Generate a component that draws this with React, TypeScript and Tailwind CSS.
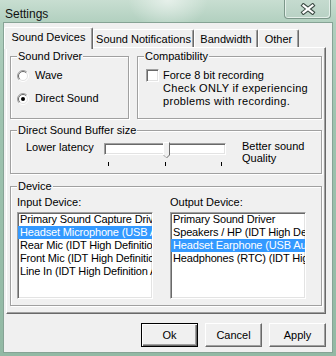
import React from "react";

const sunken =
  "border border-t-[#a0a0a0] border-l-[#a0a0a0] border-r-white border-b-white shadow-[inset_1px_1px_0_#696969,inset_-1px_-1px_0_#e3e3e3]";
const group = "border border-[#a0a0a0] shadow-[inset_1px_1px_0_#fff,1px_1px_0_#fff]";
const legend = "ml-[6px] px-px bg-[#f0f0f0] leading-[13px]";

function Radio({ checked }: { checked?: boolean }) {
  return (
    <svg width="12" height="12" viewBox="0 0 12 12" className="shrink-0">
      <circle cx="6" cy="6" r="5" fill="#fff" />
      <path d="M9.9 2.1 A5.5 5.5 0 0 0 2.1 9.9" stroke="#a0a0a0" fill="none" />
      <path d="M2.1 9.9 A5.5 5.5 0 0 0 9.9 2.1" stroke="#fff" fill="none" />
      <path d="M9.2 2.8 A4.5 4.5 0 0 0 2.8 9.2" stroke="#696969" fill="none" />
      <path d="M2.8 9.2 A4.5 4.5 0 0 0 9.2 2.8" stroke="#e3e3e3" fill="none" />
      {checked && <circle cx="6" cy="6" r="2" fill="#000" />}
    </svg>
  );
}

function ListBox({ items, selected }: { items: string[]; selected: number }) {
  return (
    <div className={`${sunken} bg-white h-[87px] overflow-hidden`}>
      {items.map((item, i) => (
        <div
          key={item}
          className={`px-[2px] h-[13px] leading-[13px] whitespace-nowrap overflow-hidden tracking-[-0.15px] ${
            i === selected ? "bg-[#3399ff] text-white" : ""
          }`}
        >
          {item}
        </div>
      ))}
    </div>
  );
}

function Button({ label, primary }: { label: string; primary?: boolean }) {
  return (
    <div
      className={`w-[57px] h-[24px] flex items-center justify-center bg-[#f0f0f0] ${
        primary
          ? "border border-black shadow-[inset_1px_1px_0_#fff,inset_-1px_-1px_0_#696969,inset_-2px_-2px_0_#a0a0a0]"
          : "border border-t-white border-l-white border-r-[#696969] border-b-[#696969] shadow-[inset_-1px_-1px_0_#a0a0a0]"
      }`}
    >
      {label}
    </div>
  );
}

export default function App() {
  return (
    <div className="w-[336px] h-[356px] flex flex-col overflow-hidden bg-[linear-gradient(180deg,#c8ded1_0px,#b0cfbe_24px,#9ec3af_120px,#92b9a4_356px)] font-['Liberation_Sans',Arial,sans-serif] text-[11px] text-black">
      {/* title bar */}
      <div className="h-[23px] shrink-0 flex items-start bg-[radial-gradient(ellipse_40px_30px_at_50%_0%,rgba(255,255,255,0.55),transparent)]">
        <span className="pl-[5px] pt-[7px] text-[12px] leading-[14px] text-[#111]">Settings</span>
        <div className="ml-auto mr-[5px] w-[47px] h-[19px] flex items-center justify-center rounded-b-[4px] border border-t-0 border-[#7c978a] shadow-[inset_1px_0_0_#e4efe9,inset_-1px_-1px_0_#e4efe9] bg-[linear-gradient(180deg,#c5dbcf,#b8d1c4)]">
          <svg width="16" height="12" viewBox="0 0 16 12">
            <path d="M3.5 2.5 L12.5 9.5 M12.5 2.5 L3.5 9.5" stroke="#3c4a44" strokeWidth="4.2" strokeLinecap="square" />
            <path d="M3.5 2.5 L12.5 9.5 M12.5 2.5 L3.5 9.5" stroke="#fff" strokeWidth="2.2" strokeLinecap="square" />
          </svg>
        </div>
      </div>

      {/* client area */}
      <div className="flex-1 mx-[4px] mb-[4px] bg-[#f0f0f0] flex flex-col pl-[2px] pr-[6px] pt-[4px] shadow-[0_0_0_1px_#86a395]">
        {/* tabs */}
        <div className="flex items-end h-[20px]">
          <div className="relative z-10 -ml-[2px] -mb-[2px] w-[89px] h-[22px] flex justify-center pt-[3px] leading-[13px] bg-[#f0f0f0] border-t border-l border-white border-r border-r-[#696969] rounded-t-[2px] shadow-[inset_-1px_0_0_#a0a0a0]">
            Sound Devices
          </div>
          <div className="w-[101px] h-[18px] flex justify-center pt-[3px] leading-[13px] border-t border-l border-white border-r border-r-[#696969] rounded-t-[2px] shadow-[inset_-1px_0_0_#a0a0a0]">
            Sound Notifications
          </div>
          <div className="w-[64px] h-[18px] flex justify-center pt-[3px] leading-[13px] border-t border-l border-white border-r border-r-[#696969] rounded-t-[2px] shadow-[inset_-1px_0_0_#a0a0a0]">
            Bandwidth
          </div>
          <div className="w-[41px] h-[18px] flex justify-center pt-[3px] leading-[13px] border-t border-l border-white border-r border-r-[#696969] rounded-t-[2px] shadow-[inset_-1px_0_0_#a0a0a0]">
            Other
          </div>
        </div>

        {/* tab panel */}
        <div className="h-[267px] shrink-0 border border-t-white border-l-white border-r-[#696969] border-b-[#696969] shadow-[inset_-1px_-1px_0_#a0a0a0] pt-[2px] px-[3px] flex flex-col">
          <div className="flex gap-[8px]">
            <fieldset className={`${group} w-[119px] h-[69px]`}>
              <legend className={legend}>Sound Driver</legend>
              <div className="pl-[6px]">
                <div className="flex items-center gap-[6px] h-[13px] mt-[6px]">
                  <Radio />
                  <span>Wave</span>
                </div>
                <div className="flex items-center gap-[6px] h-[13px] mt-[10px]">
                  <Radio checked />
                  <span>Direct Sound</span>
                </div>
              </div>
            </fieldset>
            <fieldset className={`${group} flex-1 h-[69px]`}>
              <legend className={legend}>Compatibility</legend>
              <div className="pl-[8px]">
                <div className="flex items-center gap-[4px] h-[13px] mt-[6px]">
                  <div className={`${sunken} w-[13px] h-[13px] bg-white shrink-0`} />
                  <span>Force 8 bit recording</span>
                </div>
                <div className="pl-[17px] leading-[13px] tracking-[0.3px]">
                  Check ONLY if experiencing
                  <br />
                  problems with recording.
                </div>
              </div>
            </fieldset>
          </div>

          <fieldset className={`${group} h-[50px] mt-[5px]`}>
            <legend className={legend}>Direct Sound Buffer size</legend>
            <div className="flex items-start pl-[15px] mt-[3px]">
              <span className="w-[78px] leading-[13px] pt-[1px]">Lower latency</span>
              <div className="w-[122px] mt-[3px]">
                <div className={`${sunken} relative h-[12px] bg-white`}>
                  <svg width="8" height="17" viewBox="0 0 8 17" className="absolute left-[58px] top-[-2px]">
                    <path d="M0.5 0.5 H6.5 V13 L3.5 16 L0.5 13 Z" fill="#f0f0f0" />
                    <path d="M0.5 13 V0.5 H6.5" stroke="#fff" fill="none" />
                    <path d="M6.5 0.5 V13 L3.5 16" stroke="#696969" fill="none" />
                    <path d="M0.5 13 L3 15.5" stroke="#a0a0a0" fill="none" />
                  </svg>
                </div>
                <div className="flex justify-between px-[4px] mt-[7px]">
                  <div className="w-px h-[4px] bg-black" />
                  <div className="w-px h-[4px] bg-black" />
                  <div className="w-px h-[4px] bg-black" />
                </div>
              </div>
              <span className="ml-[16px] leading-[12px]">
                Better sound
                <br />
                Quality
              </span>
            </div>
          </fieldset>

          <fieldset className={`${group} h-[126px] mt-[6px]`}>
            <legend className={legend}>Device</legend>
            <div className="grid grid-cols-[136px_136px] gap-x-[17px] pl-[6px] mt-[3px]">
              <div>
                <div className="leading-[13px]">Input Device:</div>
                <div className="mt-[3px]">
                  <ListBox
                    selected={1}
                    items={[
                      "Primary Sound Capture Driver",
                      "Headset Microphone (USB Audio)",
                      "Rear Mic (IDT High Definition Audio CODEC)",
                      "Front Mic (IDT High Definition Audio CODEC)",
                      "Line In (IDT High Definition Audio CODEC)",
                    ]}
                  />
                </div>
              </div>
              <div>
                <div className="leading-[13px]">Output Device:</div>
                <div className="mt-[3px]">
                  <ListBox
                    selected={2}
                    items={[
                      "Primary Sound Driver",
                      "Speakers / HP (IDT High Definition Audio CODEC)",
                      "Headset Earphone (USB Audio)",
                      "Headphones (RTC) (IDT High Definition Audio CODEC)",
                    ]}
                  />
                </div>
              </div>
            </div>
          </fieldset>
        </div>

        {/* buttons */}
        <div className="flex justify-end gap-[7px] mt-[9px]">
          <Button label="Ok" primary />
          <Button label="Cancel" />
          <Button label="Apply" />
        </div>
      </div>
    </div>
  );
}
